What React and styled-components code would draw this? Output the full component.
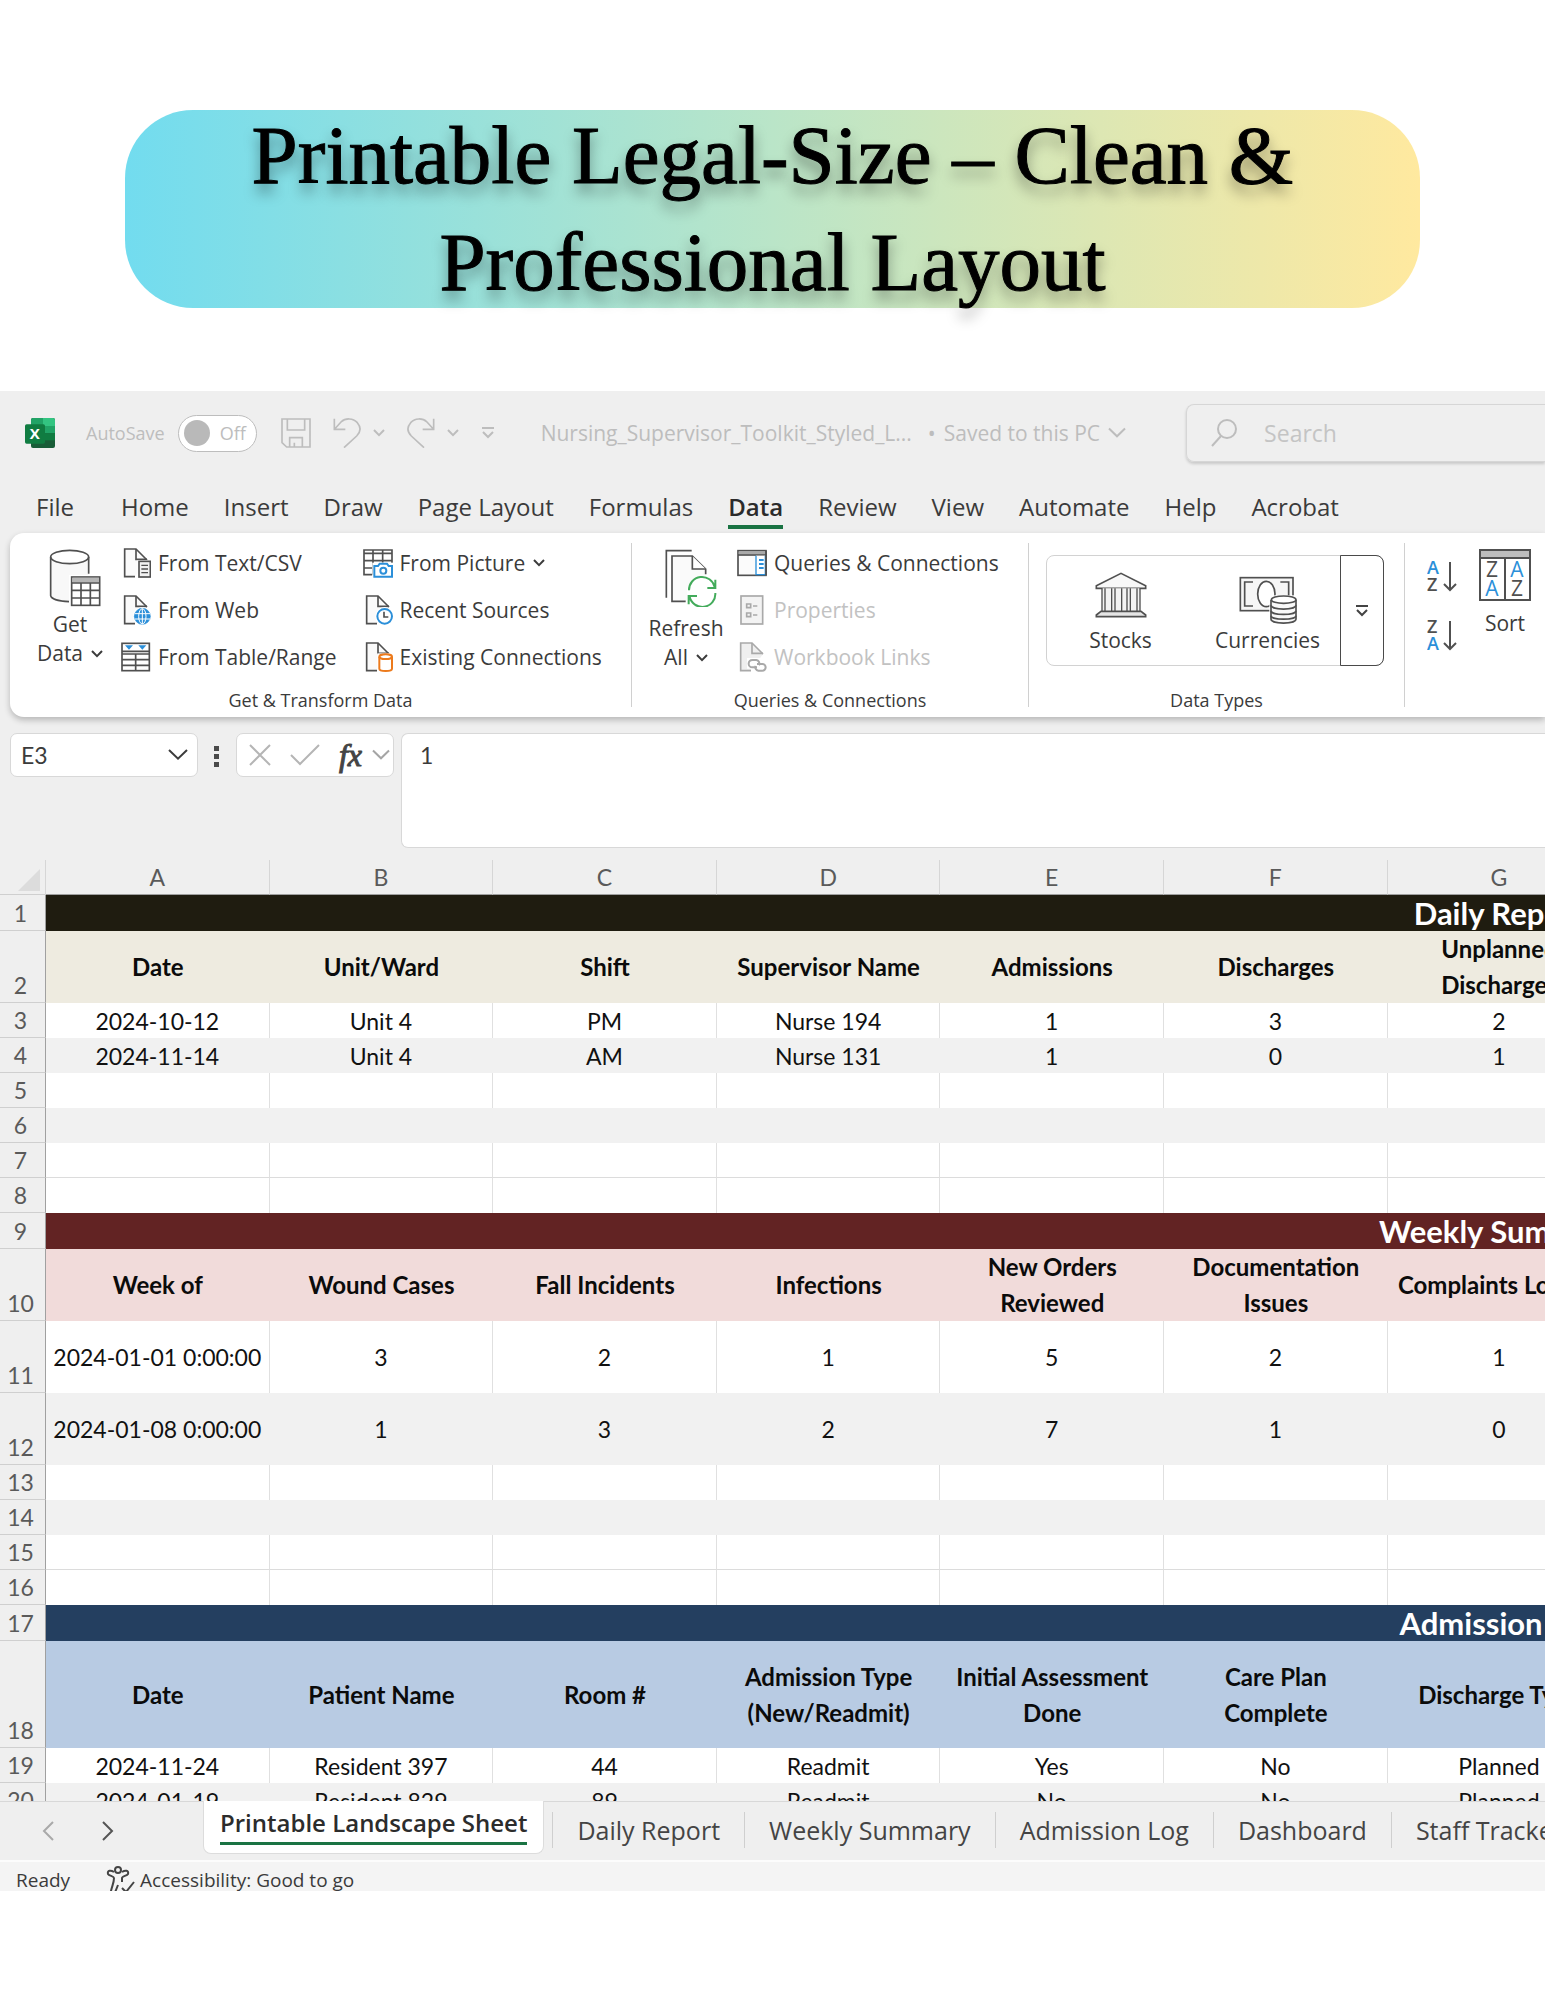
import React from 'react';
import styled, { createGlobalStyle, css } from 'styled-components';

const ui = '"Open Sans", "Noto Sans", sans-serif';
const sheet = 'Lato, "Liberation Sans", sans-serif';
const ink = '#3b3b3b';
const faded = '#bdbdbd';
const chrome = '#efefef';
const green = '#1a7343';
const blue = '#2b8fd9';

const GlobalStyle = createGlobalStyle`
  *, *::before, *::after {
    box-sizing: border-box;
  }

  body {
    margin: 0;
    background: #ffffff;
    overflow-x: hidden;
  }

  button, input {
    margin: 0;
    padding: 0;
    border: 0;
    background: none;
    color: inherit;
    font: inherit;
  }

  svg {
    display: block;
    flex-shrink: 0;
  }
`;

const Page = styled.main`
  padding: 110px 0;
`;

const Banner = styled.header`
  display: flex;
  align-items: center;
  justify-content: center;
  height: 198px;
  margin: 0 125px 83px;
  border-radius: 68px;
  background: linear-gradient(90deg, #72dcef 0%, #bae5c8 50%, #ffe99f 100%);
`;

const BannerTitle = styled.h1`
  margin: 0;
  max-width: 1140px;
  color: #000000;
  font-family: 'Liberation Serif', serif;
  font-size: 83px;
  font-weight: 400;
  line-height: 107px;
  text-align: center;
  text-shadow: 0 9px 14px rgba(0, 0, 0, 0.4);
  -webkit-text-stroke: 1px #000000;
`;

const Window = styled.section`
  overflow: hidden;
  background: ${chrome};
  color: ${ink};
  font-family: ${ui};
`;

const TitleBar = styled.div`
  display: flex;
  align-items: center;
  height: 84px;
  padding-left: 25px;
  color: ${faded};
  white-space: nowrap;
`;

const AutoSave = styled.label`
  display: flex;
  align-items: center;
  gap: 13px;
  margin: 0 24px 0 31px;
  font-size: 18px;
`;

const Toggle = styled.span`
  display: flex;
  align-items: center;
  gap: 10px;
  width: 79px;
  height: 37px;
  padding-left: 5px;
  border: 1px solid ${faded};
  border-radius: 19px;
  background: #ffffff;
`;

const ToggleInput = styled.input`
  appearance: none;
  width: 26px;
  height: 26px;
  border-radius: 50%;
  background: #b9b9b9;
`;

const QuickAccess = styled.div`
  display: flex;
  align-items: center;
  gap: 22px;
`;

const IconButton = styled.button`
  display: flex;
  align-items: center;
  gap: 12px;
`;

const FileInfo = styled.button`
  display: flex;
  align-items: center;
  gap: 8px;
  margin-left: 46px;
  font-size: 21px;
`;

const FileName = styled.span`
  margin-right: 8px;
`;

const SearchBox = styled.label`
  display: flex;
  flex: 1;
  align-items: center;
  gap: 27px;
  min-width: 200px;
  height: 58px;
  margin-left: 60px;
  padding-left: 24px;
  border: 1px solid #d6d6d6;
  border-right: 0;
  border-radius: 8px 0 0 8px;
  box-shadow: 0 2px 3px rgba(0, 0, 0, 0.16);
`;

const SearchInput = styled.input`
  flex: 1;
  min-width: 0;
  font-size: 23px;

  &::placeholder {
    color: #c4c4c4;
    opacity: 1;
  }
`;

const TabList = styled.nav`
  display: flex;
  gap: 35px;
  height: 58px;
  padding: 14px 0 4px 36px;
`;

const RibbonTab = styled.button`
  border-bottom: 4px solid transparent;
  font-size: 24px;
  line-height: 30px;
  white-space: nowrap;

  &:first-child {
    margin-right: 12px;
  }

  ${({ $active }) =>
    $active &&
    css`
      border-color: ${green};
      color: #2b2b2b;
      font-weight: 600;
    `}
`;

const Ribbon = styled.div`
  display: flex;
  margin-left: 10px;
  border-radius: 14px 0 0 14px;
  background: #ffffff;
  box-shadow: 0 3px 6px rgba(0, 0, 0, 0.24);
`;

const Group = styled.div`
  display: flex;
  flex-direction: column;
  flex-shrink: 0;
  width: ${({ $width }) => $width}px;
  padding-top: 6px;
`;

const GroupBody = styled.div`
  display: flex;
  height: 144px;
  padding-left: ${({ $inset }) => $inset}px;
`;

const GroupName = styled.div`
  font-size: 18px;
  line-height: 34px;
  text-align: center;
`;

const Divider = styled.div`
  flex-shrink: 0;
  width: 1px;
  margin: 10px 0;
  background: #d0d0d0;
`;

const BigButton = styled.button`
  display: flex;
  flex-direction: column;
  align-items: center;
  gap: ${({ $gap }) => $gap || 3}px;
  width: ${({ $width }) => $width || 92}px;
  padding-top: 10px;
  font-size: 21px;
  line-height: 29px;
`;

const BigLabel = styled.span`
  display: flex;
  flex-direction: column;
  align-items: center;
`;

const WithArrow = styled.span`
  display: flex;
  align-items: center;
  gap: 8px;
`;

const Commands = styled.div`
  display: grid;
  grid-template-rows: repeat(3, 47px);
  grid-auto-flow: column;
  column-gap: 26px;
  padding-left: 5px;
`;

const Command = styled.button`
  display: flex;
  align-items: center;
  gap: 7px;
  font-size: 21px;
  text-align: left;
  white-space: nowrap;

  &:disabled {
    color: #c2c2c2;
  }
`;

const Gallery = styled.div`
  display: flex;
  width: 338px;
  height: 111px;
  margin-top: 16px;
  border: 1px solid #d2d2d2;
  border-radius: 8px;
`;

const GalleryItem = styled.button`
  display: flex;
  flex: 1;
  flex-direction: column;
  align-items: center;
  justify-content: flex-end;
  gap: ${({ $gap }) => $gap}px;
  padding-bottom: 11px;
  font-size: 21px;
  line-height: 28px;
`;

const GalleryMore = styled.button`
  display: flex;
  align-items: center;
  justify-content: center;
  width: 44px;
  margin: -1px;
  border: 1px solid #4a4a4a;
  border-radius: 0 8px 8px 0;
`;

const SortOrder = styled.div`
  display: flex;
  flex-direction: column;
  gap: 28px;
  padding-top: 22px;
`;

const FormulaBar = styled.div`
  display: flex;
  align-items: flex-start;
  margin: 16px 0 12px 10px;
`;

const barBox = css`
  display: flex;
  align-items: center;
  height: 44px;
  border: 1px solid #d8d8d8;
  border-radius: 7px;
  background: #ffffff;
`;

const NameBox = styled.div`
  ${barBox}
  width: 188px;
  padding: 0 9px 0 10px;
`;

const NameInput = styled.input`
  flex: 1;
  min-width: 0;
  font-family: ${sheet};
  font-size: 23px;
`;

const Grip = styled.span`
  display: grid;
  gap: 3px;
  margin: 13px 17px 0 16px;

  i {
    width: 5px;
    height: 5px;
    background: #4a4a4a;
  }
`;

const FormulaActions = styled.div`
  ${barBox}
  justify-content: space-between;
  width: 158px;
  padding: 0 3px 0 11px;
  color: #b5b5b5;
`;

const FxButton = styled.button`
  display: flex;
  align-items: center;
  gap: 10px;
  color: #444444;
  font-family: 'Liberation Serif', serif;
  font-size: 32px;
  font-style: italic;
  line-height: 36px;
  -webkit-text-stroke: 1px #444444;
`;

const FormulaInput = styled.textarea`
  flex: 1;
  height: 115px;
  margin: 0 0 0 7px;
  padding: 5px 18px;
  border: 1px solid #d8d8d8;
  border-right: 0;
  border-radius: 7px 0 0 7px;
  background: #ffffff;
  color: ${ink};
  font-family: ${sheet};
  font-size: 23px;
  line-height: 32px;
  resize: none;
`;

const SheetView = styled.div`
  height: 941px;
  overflow: hidden;
`;

const Table = styled.table`
  width: 2953px;
  border-spacing: 0;
  table-layout: fixed;
  background: #ffffff;
  color: #111111;
  font-family: ${sheet};
  font-size: 23px;

  th,
  td {
    padding: 0;
    white-space: pre-line;
  }

  td {
    text-align: center;
  }
`;

const NumberCol = styled.col`
  width: 46px;
`;

const ColumnHead = styled.th`
  height: 35px;
  border-right: 1px solid #d6d6d6;
  border-bottom: 1px solid #9f9f9f;
  background: ${chrome};
  color: #5a5a5a;
  font-weight: 400;
  line-height: 30px;
`;

const Corner = styled(ColumnHead)`
  border-bottom-color: #cfcfcf;

  &::after {
    content: '';
    display: block;
    width: 22px;
    height: 22px;
    margin: 6px 0 0 18px;
    background: #dcdcdc;
    clip-path: polygon(100% 0, 100% 100%, 0 100%);
  }
`;

const RowHead = styled.th`
  padding-right: 4px !important;
  border-right: 1px solid #a0a0a0;
  border-bottom: 1px solid #cfcfcf;
  background: ${chrome};
  color: #5a5a5a;
  font-weight: 400;
  line-height: 34px;
  vertical-align: bottom;
`;

const Row = styled.tr`
  height: ${({ $height }) => $height || 35}px;
  background: ${({ $fill }) => $fill || '#ffffff'};
`;

const Cell = styled.td`
  border-right: 1px solid ${({ $grid }) => ($grid ? '#e0e0e0' : 'transparent')};
  border-bottom: ${({ $rule }) => ($rule ? '1px solid #dcdcdc' : 0)};
  line-height: 34px;
`;

const HeadCell = styled.td`
  color: #0b0b0b;
  font-size: 24px;
  font-weight: 700;
  line-height: 36px;
`;

const SectionCell = styled.td`
  color: #ffffff;
  font-size: 31px;
  font-weight: 700;
  line-height: 36px;
`;

const SheetTabs = styled.div`
  display: flex;
  height: 59px;
  border-top: 1px solid #d8d8d8;
  color: #444444;
  font-size: 25px;
  white-space: nowrap;
`;

const SheetArrows = styled.div`
  display: flex;
  align-items: center;
  gap: 48px;
  width: 203px;
  flex-shrink: 0;
  padding-left: 42px;
`;

const ActiveSheet = styled.button`
  height: 53px;
  flex-shrink: 0;
  margin: -1px 8px 0 0;
  padding: 0 16px 5px;
  border: 1px solid #dcdcdc;
  border-top: 0;
  border-radius: 0 0 8px 8px;
  background: #ffffff;
  color: #2c2c2c;
  font-size: 24px;
  font-weight: 600;

  span {
    display: block;
    border-bottom: 3px solid ${green};
    line-height: 38px;
  }
`;

const SheetTab = styled.button`
  height: 36px;
  margin-top: 10px;
  flex-shrink: 0;
  padding: 0 24px;
  border-left: 1px solid #cfcfcf;
`;

const StatusBar = styled.footer`
  display: flex;
  align-items: center;
  gap: 36px;
  height: 31px;
  padding: 7px 16px 0;
  overflow: hidden;
  border-top: 2px solid #fcfcfc;
  background: #f4f4f4;
  font-size: 19px;
  line-height: 24px;
`;

const StatusItem = styled.span`
  display: flex;
  align-items: center;
  gap: 4px;
`;

const Arrow = ({ w = 12, sw = 2, color = 'currentColor' }) => (
  <svg width={w} height={w} viewBox={`0 0 ${w} ${w}`} fill="none" stroke={color} strokeWidth={sw}>
    <path d={`M1 ${w / 4} L${w / 2} ${w * 0.68} L${w - 1} ${w / 4}`} />
  </svg>
);

const Overflow = ({ color }) => (
  <svg width="14" height="14" viewBox="0 0 14 14" fill="none" stroke={color} strokeWidth="2">
    <path d="M1 2 H13 M2 6 L7 11 L12 6" />
  </svg>
);

const ExcelLogo = () => (
  <svg width="30" height="30" viewBox="0 0 90 90">
    <rect x="18" width="72" height="90" rx="6" fill="#185c37" />
    <path d="M24 0 H54 V24 H18 V6 Q18 0 24 0" fill="#21a366" />
    <path d="M54 0 H84 Q90 0 90 6 V24 H54 Z" fill="#33c481" />
    <path d="M18 24 H54 V46 H18 Z" fill="#107c41" />
    <path d="M54 24 H90 V46 H54 Z" fill="#21a366" />
    <path d="M54 46 H90 V67 H54 Z" fill="#107c41" />
    <rect y="19" width="60" height="58" rx="5" fill="#107c41" />
    <text x="29" y="64" fill="#fff" fontSize="45" fontWeight="700" fontFamily="Open Sans" textAnchor="middle">
      X
    </text>
  </svg>
);

const SaveIcon = () => (
  <svg width="30" height="30" viewBox="0 0 90 90" fill="none" stroke={faded} strokeWidth="5">
    <path d="M3 3 H87 V87 H17 L3 74 Z M19 3 V36 H71 V3 M26 87 V59 H64 V87 M40 87 V74" />
  </svg>
);

const UndoIcon = ({ flip }) => (
  <svg width="28" height="30" viewBox="0 0 84 90" fill="none" stroke={faded} strokeWidth="5">
    <path
      transform={flip ? 'translate(84 0) scale(-1 1)' : undefined}
      d="M4 2 V34 H37 M5 33 L24 12 C38 -1 60 0 73 14 C84 27 83 42 71 54 L33 89"
    />
  </svg>
);

const SearchIcon = () => (
  <svg width="26" height="28" viewBox="0 0 26 28" fill="none" stroke={faded} strokeWidth="2">
    <circle cx="16" cy="10" r="9" />
    <path d="M10 17 L1 27" />
  </svg>
);

const big = { width: 62, height: 58, viewBox: '-30 0 186 174', fill: 'none', stroke: '#505050', strokeWidth: 5 };
const small = { width: 30, height: 30, viewBox: '0 0 90 90', fill: 'none', stroke: '#505050', strokeWidth: 5 };

const GetDataIcon = () => (
  <svg {...big}>
    <path d="M5 24 V140 C5 150 30 156 60 158 L119 158 V24" fill="#f8f8f8" stroke="none" />
    <ellipse cx="62" cy="24" rx="57" ry="20" fill="#fff" />
    <path d="M5 24 V140 C7 150 30 157 60 158 M119 24 V74" />
    <rect x="60" y="78" width="96" height="96" fill="#fff" stroke="none" />
    <rect x="68" y="84" width="84" height="85" fill="#fff" />
    <path d="M70 86 H150 V101 H70 Z" fill="#b5b5b5" stroke="none" />
    <path d="M68 102 H152 M68 124 H152 M68 147 H152 M96 102 V169 M124 102 V169" />
  </svg>
);

const RefreshIcon = () => (
  <svg {...big}>
    <path d="M4 146 V5 H80" />
    <path d="M62 157 H21 V21 H82 L122 60 V76" fill="#fafafa" />
    <path d="M82 21 V60 H122" fill="#fff" />
    <circle cx="112" cy="128" r="46" fill="#fff" stroke="none" />
    <g stroke="#43ab5b" strokeWidth="6">
      <path d="M72 124 A39 39 0 0 1 149 114 M151 92 V117 H127" />
      <path d="M151 132 A39 39 0 0 1 74 143 M71 166 V141 H96" />
    </g>
  </svg>
);

const Sheet = ({ children, disabled }) => (
  <svg {...small} stroke={disabled ? '#a9a9a9' : '#505050'}>
    <path d="M42 86 H11 V3 H45 L78 36" fill={disabled ? '#efefef' : '#fafafa'} />
    <path d="M45 3 V34 H78" />
    {children}
  </svg>
);

const TextFileIcon = () => (
  <Sheet>
    <rect x="50" y="36" width="40" height="54" fill="#fff" stroke="none" />
    <rect x="54" y="40" width="34" height="47" fill="#f1f1f1" />
    <path d="M61 52 H81 M61 63 H81 M61 74 H81" strokeWidth="4" />
  </Sheet>
);

const WebFileIcon = () => (
  <Sheet>
    <circle cx="64" cy="64" r="28" fill="#fff" stroke="none" />
    <circle cx="64" cy="64" r="24" fill={blue} stroke={blue} strokeWidth="2" />
    <g stroke="#fff" strokeWidth="3">
      <ellipse cx="64" cy="64" rx="11" ry="23" />
      <path d="M41 56 H87 M41 72 H87 M64 41 V87" />
    </g>
  </Sheet>
);

const RecentIcon = () => (
  <Sheet>
    <circle cx="65" cy="64" r="28" fill="#fff" stroke="none" />
    <circle cx="65" cy="64" r="22" fill="#fff" stroke={blue} strokeWidth="6" />
    <path d="M63 50 V66 H76" />
  </Sheet>
);

const ConnectionsIcon = () => (
  <Sheet>
    <rect x="43" y="34" width="47" height="56" fill="#fff" stroke="none" />
    <g stroke="#ec7a1c" strokeWidth="6">
      <path d="M49 44 V80 C49 89 87 89 87 80 V44" />
      <ellipse cx="68" cy="44" rx="19" ry="7" />
    </g>
  </Sheet>
);

const TableIcon = () => (
  <svg {...small}>
    <rect x="3" y="4" width="82" height="82" fill="#fff" />
    <path d="M3 28 H85 M3 36 H85 M3 53 H85 M3 70 H85 M44 36 V86" />
    <path d="M12 10 H36 L24 23 Z M52 10 H76 L64 23 Z" fill={blue} stroke="none" />
  </svg>
);

const PictureIcon = () => (
  <svg {...small}>
    <path d="M28 80 H3 V6 H87 V46 M3 16 H87 M3 38 H87 M3 60 H30 M30 6 V80 M59 6 V44" />
    <path d="M28 44 H90 V90 H28 Z" fill="#fff" stroke="none" />
    <path d="M34 54 H45 L50 47 H72 L77 54 H87 V86 H34 Z" fill="#fff" stroke={blue} strokeWidth="6" />
    <circle cx="61" cy="68" r="9" stroke={blue} strokeWidth="6" />
  </svg>
);

const QueriesIcon = () => (
  <svg {...small}>
    <rect x="3" y="8" width="84" height="74" fill="#fbfbfb" />
    <path d="M5 10 H85 V19 H5 Z" fill="#a9a9a9" stroke="none" />
    <path d="M3 21 H87" />
    <path d="M57 23 V80 H85 V23" fill="#fff" stroke={blue} strokeWidth="4" />
    <path d="M66 36 H80 M66 48 H80 M66 60 H80" stroke={blue} strokeWidth="6" />
    <path d="M87 8 V82" />
  </svg>
);

const PropertiesIcon = () => (
  <svg {...small} stroke="#a9a9a9">
    <rect x="12" y="3" width="65" height="84" fill="#f3f3f3" />
    <path d="M29 27 H41 V38 H29 Z M29 54 H41 V65 H29 Z M48 33 H61 M48 60 H61" />
  </svg>
);

const LinksIcon = () => (
  <Sheet disabled>
    <path d="M30 48 H90 V90 H42 V80 H30 Z" fill="#fff" stroke="none" />
    <path d="M60 76 H46 A11 11 0 0 1 46 54 H58 A11 11 0 0 1 66 70" strokeWidth="6" />
    <path d="M60 66 H76 A10 10 0 0 1 76 86 H64 A10 10 0 0 1 56 72" strokeWidth="6" />
  </Sheet>
);

const StocksIcon = () => (
  <svg width="52" height="46" viewBox="0 0 156 138" fill="none" stroke="#505050" strokeWidth="5">
    <path d="M4 49 V41 L78 4 L152 41 V49 Z" fill="#f8f8f8" />
    <path d="M22 49 H134 V118 H22 Z" fill="#f3f3f3" stroke="none" />
    <path d="M21 49 V118 M30 49 V118 M50 49 V118 M60 49 V118 M80 49 V118 M96 49 V118 M106 49 V118 M126 49 V118 M135 49 V118" strokeWidth="4" />
    <path d="M18 118 H138 L152 129 V134 H4 V129 Z" fill="#e5e5e5" />
  </svg>
);

const CurrenciesIcon = () => (
  <svg width="58" height="48" viewBox="0 0 174 144" fill="none" stroke="#505050" strokeWidth="5">
    <rect x="4" y="5" width="158" height="99" fill="#f6f6f6" />
    <path d="M42 18 H17 V90 H42 M124 18 H149 V60" />
    <ellipse cx="82" cy="54" rx="26" ry="38" fill="#fff" />
    <path d="M91 58 H174 V144 H91 Z" fill="#fff" stroke="none" />
    <path d="M96 72 V130 C96 145 171 145 171 130 V72" fill="#f8f8f8" />
    <ellipse cx="134" cy="71" rx="37" ry="11" fill="#fff" />
    <path d="M96 88 C96 103 171 103 171 88 M96 104 C96 119 171 119 171 104 M96 119 C96 133 171 133 171 119" />
  </svg>
);

const OrderIcon = ({ top, bottom }) => (
  <svg width="30" height="31" viewBox="0 0 30 31" fontFamily="Open Sans" fontSize="18" fontWeight="600">
    <text x="0" y="13" fill={top === 'A' ? blue : '#505050'}>
      {top}
    </text>
    <text x="0" y="30" fill={bottom === 'A' ? blue : '#505050'}>
      {bottom}
    </text>
    <path d="M23 1 V29 M17 23 L23 29 L29 23" fill="none" stroke="#505050" strokeWidth="2" />
  </svg>
);

const SortIcon = () => (
  <svg width="52" height="53" viewBox="0 0 52 53" fontFamily="Open Sans" fontSize="21" textAnchor="middle">
    <path d="M1 1 H51 V51 H1 Z" fill="#fff" stroke="#505050" strokeWidth="2" />
    <path d="M2 2 H50 V8 H2 Z" fill="#bdbdbd" />
    <path d="M1 9 H51 M26 9 V51" stroke="#505050" strokeWidth="2" />
    <text x="13" y="28" fill="#505050">Z</text>
    <text x="13" y="47" fill={blue}>A</text>
    <text x="38" y="28" fill={blue}>A</text>
    <text x="38" y="47" fill="#505050">Z</text>
  </svg>
);

const AccessIcon = () => (
  <svg width="30" height="28" viewBox="0 0 30 28" fill="none" stroke="#444" strokeWidth="2">
    <circle cx="12" cy="4" r="3" />
    <path d="M8 6 C5 4 1 4 2 8 C3 10 8 10 8 12 C8 17 6 20 5 25 C6 28 9 27 10 24 L12 19 M16 6 C19 4 23 4 22 8 C21 10 16 10 16 12 V16" />
    <path d="M16 22 L20 26 L28 16" />
  </svg>
);

const tabs = ['File', 'Home', 'Insert', 'Draw', 'Page Layout', 'Formulas', 'Data', 'Review', 'View', 'Automate', 'Help', 'Acrobat'];
const columns = ['A', 'B', 'C', 'D', 'E', 'F', 'G', 'H', 'I', 'J', 'K', 'L', 'M'];
const blank = ['', '', '', '', '', '', ''];
const band = '#f1f1f1';

const rows = [
  { type: 'section', fill: '#1f1c10', title: 'Daily Report' },
  {
    type: 'head',
    fill: '#eeebe0',
    cells: ['Date', 'Unit/Ward', 'Shift', 'Supervisor Name', 'Admissions', 'Discharges', 'Unplanned\nDischarges']
  },
  { cells: ['2024-10-12', 'Unit 4', 'PM', 'Nurse 194', '1', '3', '2'] },
  { fill: band, cells: ['2024-11-14', 'Unit 4', 'AM', 'Nurse 131', '1', '0', '1'] },
  { cells: blank },
  { fill: band, cells: blank },
  { cells: blank, rule: true },
  { cells: blank },
  { type: 'section', fill: '#622323', title: 'Weekly Summary' },
  {
    type: 'head',
    fill: '#f1dbda',
    cells: ['Week of', 'Wound Cases', 'Fall Incidents', 'Infections', 'New Orders\nReviewed', 'Documentation\nIssues', 'Complaints Logged']
  },
  { height: 72, cells: ['2024-01-01 0:00:00', '3', '2', '1', '5', '2', '1'] },
  { height: 72, fill: band, cells: ['2024-01-08 0:00:00', '1', '3', '2', '7', '1', '0'] },
  { cells: blank },
  { fill: band, cells: blank },
  { cells: blank, rule: true },
  { cells: blank },
  { type: 'section', fill: '#243f60', title: 'Admission Log' },
  {
    type: 'head',
    height: 107,
    fill: '#b8cbe3',
    cells: [
      'Date',
      'Patient Name',
      'Room #',
      'Admission Type\n(New/Readmit)',
      'Initial Assessment\nDone',
      'Care Plan\nComplete',
      'Discharge Type'
    ]
  },
  { cells: ['2024-11-24', 'Resident 397', '44', 'Readmit', 'Yes', 'No', 'Planned'] },
  { fill: band, cells: ['2024-01-19', 'Resident 829', '89', 'Readmit', 'No', 'No', 'Planned'] }
];

const SheetRow = ({ row, number }) => {
  if (row.type === 'section') {
    return (
      <Row $height={36} $fill={row.fill}>
        <RowHead scope="row">{number}</RowHead>
        <SectionCell colSpan={13}>{row.title}</SectionCell>
      </Row>
    );
  }

  if (row.type === 'head') {
    return (
      <Row $height={row.height || 72} $fill={row.fill}>
        <RowHead scope="row">{number}</RowHead>
        {row.cells.map(cell => (
          <HeadCell key={cell}>{cell}</HeadCell>
        ))}
      </Row>
    );
  }

  return (
    <Row $height={row.height} $fill={row.fill}>
      <RowHead scope="row">{number}</RowHead>
      {row.cells.map((cell, i) => (
        <Cell key={i} $grid={!row.fill} $rule={row.rule}>
          {cell}
        </Cell>
      ))}
    </Row>
  );
};

const App = () => {
  return (
    <Page>
      <GlobalStyle />
      <Banner>
        <BannerTitle>Printable Legal-Size – Clean &amp; Professional Layout</BannerTitle>
      </Banner>

      <Window>
        <TitleBar>
          <ExcelLogo />
          <AutoSave>
            AutoSave
            <Toggle>
              <ToggleInput type="checkbox" role="switch" />
              Off
            </Toggle>
          </AutoSave>
          <QuickAccess>
            <IconButton aria-label="Save">
              <SaveIcon />
            </IconButton>
            <IconButton aria-label="Undo">
              <UndoIcon />
              <Arrow />
            </IconButton>
            <IconButton aria-label="Redo">
              <UndoIcon flip />
              <Arrow />
            </IconButton>
            <IconButton aria-label="Customize toolbar">
              <Overflow color={faded} />
            </IconButton>
          </QuickAccess>
          <FileInfo>
            <FileName>Nursing_Supervisor_Toolkit_Styled_L...</FileName>
            <span>•</span>
            <span>Saved to this PC</span>
            <Arrow w={18} />
          </FileInfo>
          <SearchBox>
            <SearchIcon />
            <SearchInput type="search" placeholder="Search" aria-label="Search" />
          </SearchBox>
        </TitleBar>

        <TabList>
          {tabs.map(tab => (
            <RibbonTab key={tab} $active={tab === 'Data'}>
              {tab}
            </RibbonTab>
          ))}
        </TabList>

        <Ribbon>
          <Group $width={621}>
            <GroupBody $inset={14}>
              <BigButton>
                <GetDataIcon />
                <BigLabel>
                  Get
                  <WithArrow>
                    Data <Arrow />
                  </WithArrow>
                </BigLabel>
              </BigButton>
              <Commands>
                <Command><TextFileIcon />From Text/CSV</Command>
                <Command><WebFileIcon />From Web</Command>
                <Command><TableIcon />From Table/Range</Command>
                <Command>
                  <PictureIcon />
                  <WithArrow>
                    From Picture <Arrow />
                  </WithArrow>
                </Command>
                <Command><RecentIcon />Recent Sources</Command>
                <Command><ConnectionsIcon />Existing Connections</Command>
              </Commands>
            </GroupBody>
            <GroupName>Get &amp; Transform Data</GroupName>
          </Group>
          <Divider />
          <Group $width={396}>
            <GroupBody $inset={8}>
              <BigButton $gap={7}>
                <RefreshIcon />
                <BigLabel>
                  Refresh
                  <WithArrow>
                    All <Arrow />
                  </WithArrow>
                </BigLabel>
              </BigButton>
              <Commands>
                <Command><QueriesIcon />Queries &amp; Connections</Command>
                <Command disabled><PropertiesIcon />Properties</Command>
                <Command disabled><LinksIcon />Workbook Links</Command>
              </Commands>
            </GroupBody>
            <GroupName>Queries &amp; Connections</GroupName>
          </Group>
          <Divider />
          <Group $width={375}>
            <GroupBody $inset={17}>
              <Gallery>
                <GalleryItem $gap={8}>
                  <StocksIcon />
                  Stocks
                </GalleryItem>
                <GalleryItem $gap={2}>
                  <CurrenciesIcon />
                  Currencies
                </GalleryItem>
                <GalleryMore aria-label="More data types">
                  <Overflow color="#444444" />
                </GalleryMore>
              </Gallery>
            </GroupBody>
            <GroupName>Data Types</GroupName>
          </Group>
          <Divider />
          <Group $width={240}>
            <GroupBody $inset={22}>
              <SortOrder>
                <IconButton aria-label="Sort A to Z">
                  <OrderIcon top="A" bottom="Z" />
                </IconButton>
                <IconButton aria-label="Sort Z to A">
                  <OrderIcon top="Z" bottom="A" />
                </IconButton>
              </SortOrder>
              <BigButton $gap={7} $width={96}>
                <SortIcon />
                Sort
              </BigButton>
            </GroupBody>
          </Group>
        </Ribbon>

        <FormulaBar>
          <NameBox>
            <NameInput aria-label="Name box" defaultValue="E3" />
            <IconButton aria-label="Open name list">
              <Arrow w={20} />
            </IconButton>
          </NameBox>
          <Grip>
            <i />
            <i />
            <i />
          </Grip>
          <FormulaActions>
            <IconButton aria-label="Cancel">
              <svg width="24" height="24" viewBox="0 0 24 24" fill="none" stroke="currentColor" strokeWidth="2">
                <path d="M2 2 L22 22 M22 2 L2 22" />
              </svg>
            </IconButton>
            <IconButton aria-label="Enter">
              <svg width="30" height="24" viewBox="0 0 30 24" fill="none" stroke="currentColor" strokeWidth="2">
                <path d="M1 12 L10 21 L29 2" />
              </svg>
            </IconButton>
            <FxButton aria-label="Insert function">
              fx
              <Arrow w={18} color="#a5a5a5" />
            </FxButton>
          </FormulaActions>
          <FormulaInput aria-label="Formula bar" defaultValue="1" />
        </FormulaBar>

        <SheetView>
          <Table>
            <colgroup>
              <NumberCol />
              {columns.map(name => (
                <col key={name} />
              ))}
            </colgroup>
            <thead>
              <tr>
                <Corner aria-label="Select all" />
                {columns.map(name => (
                  <ColumnHead key={name} scope="col">
                    {name}
                  </ColumnHead>
                ))}
              </tr>
            </thead>
            <tbody>
              {rows.map((row, i) => (
                <SheetRow key={i} row={row} number={i + 1} />
              ))}
            </tbody>
          </Table>
        </SheetView>

        <SheetTabs>
          <SheetArrows>
            <IconButton aria-label="Previous sheet">
              <svg width="12" height="20" viewBox="0 0 12 20" fill="none" stroke="#a9a9a9" strokeWidth="2">
                <path d="M11 1 L2 10 L11 19" />
              </svg>
            </IconButton>
            <IconButton aria-label="Next sheet">
              <svg width="12" height="20" viewBox="0 0 12 20" fill="none" stroke="#555555" strokeWidth="2">
                <path d="M1 1 L10 10 L1 19" />
              </svg>
            </IconButton>
          </SheetArrows>
          <ActiveSheet>
            <span>Printable Landscape Sheet</span>
          </ActiveSheet>
          <SheetTab>Daily Report</SheetTab>
          <SheetTab>Weekly Summary</SheetTab>
          <SheetTab>Admission Log</SheetTab>
          <SheetTab>Dashboard</SheetTab>
          <SheetTab>Staff Tracker</SheetTab>
        </SheetTabs>

        <StatusBar>
          <span>Ready</span>
          <StatusItem>
            <AccessIcon />
            Accessibility: Good to go
          </StatusItem>
        </StatusBar>
      </Window>
    </Page>
  );
};

export default App;
